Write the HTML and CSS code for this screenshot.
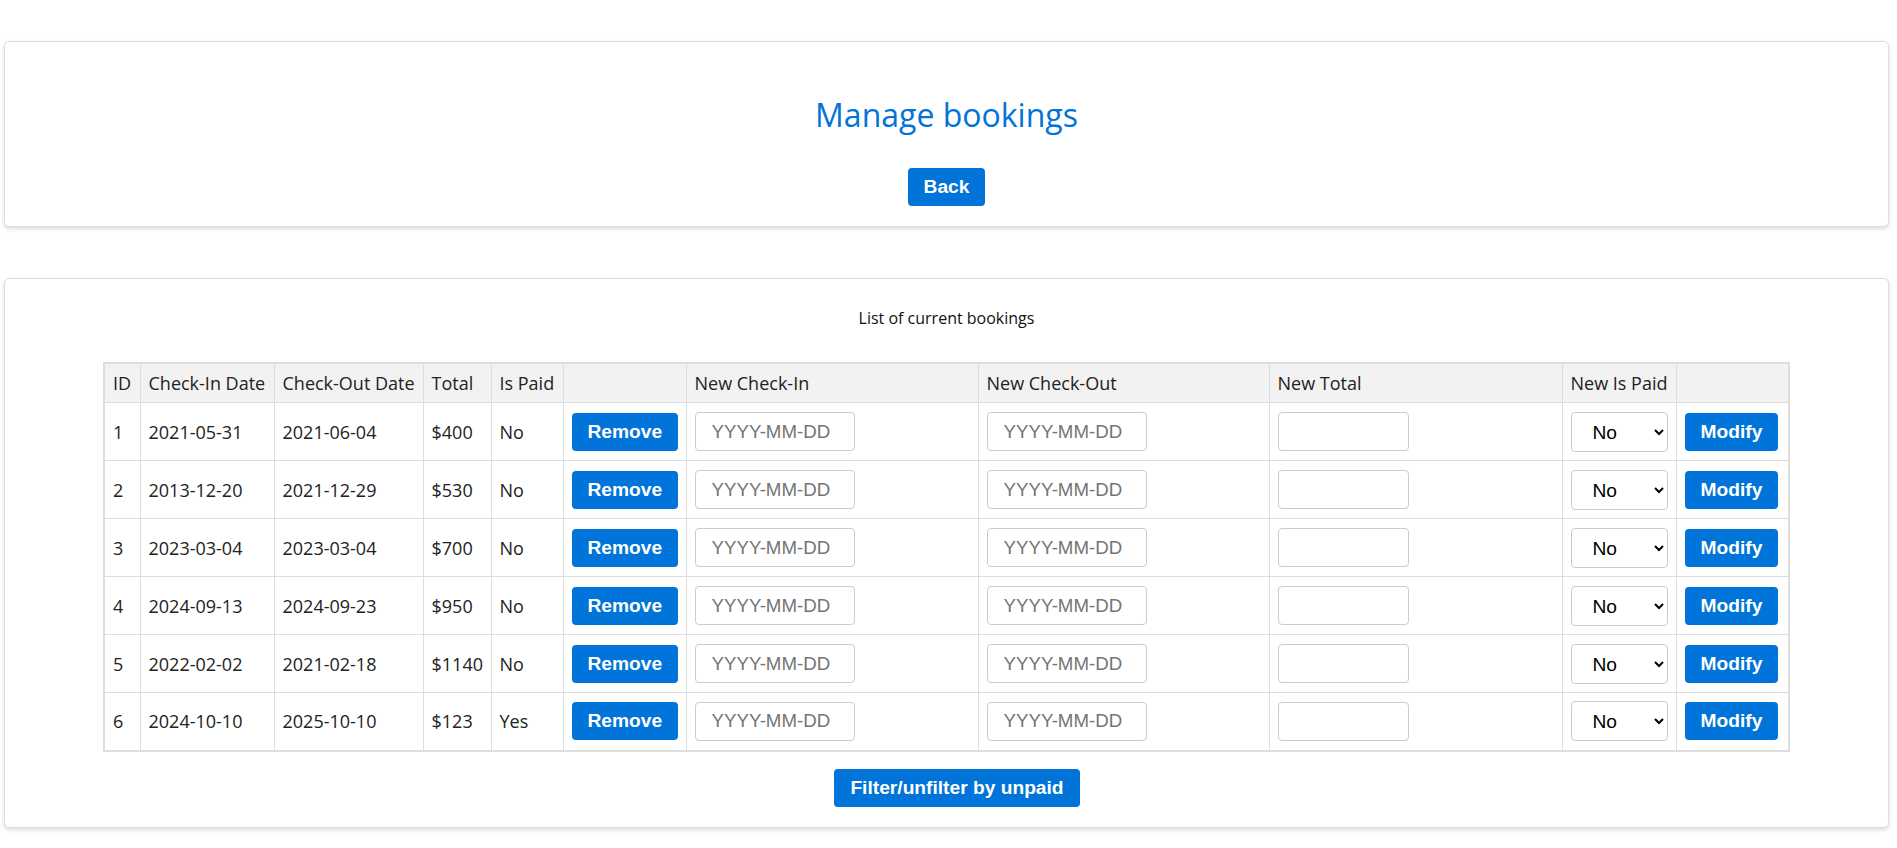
FILE: index.html
```html
<!DOCTYPE html>
<html lang="en">
<head>
<meta charset="utf-8">
<title>Manage bookings</title>
<link rel="stylesheet" href="styles.css">
</head>
<body>
<main class="page">
  <section class="card card-head">
    <h1 class="title">Manage bookings</h1>
    <button class="btn">Back</button>
  </section>

  <section class="card card-list">
    <p class="caption">List of current bookings</p>
    <table class="bookings">
      <colgroup>
        <col class="c-id"><col class="c-in"><col class="c-out"><col class="c-total"><col class="c-paid">
        <col class="c-rm"><col class="c-nin"><col class="c-nout"><col class="c-ntotal"><col class="c-npaid"><col class="c-mod">
      </colgroup>
      <thead>
        <tr>
          <th>ID</th><th>Check-In Date</th><th>Check-Out Date</th><th>Total</th><th>Is Paid</th>
          <th></th><th>New Check-In</th><th>New Check-Out</th><th>New Total</th><th>New Is Paid</th><th></th>
        </tr>
      </thead>
      <tbody>
        <tr>
          <td>1</td><td>2021-05-31</td><td>2021-06-04</td><td>$400</td><td>No</td>
          <td><button class="btn">Remove</button></td>
          <td><input class="field date" type="text" placeholder="YYYY-MM-DD"></td>
          <td><input class="field date" type="text" placeholder="YYYY-MM-DD"></td>
          <td><input class="field total" type="text"></td>
          <td><select class="pick"><option>No</option><option>Yes</option></select></td>
          <td><button class="btn">Modify</button></td>
        </tr>
        <tr>
          <td>2</td><td>2013-12-20</td><td>2021-12-29</td><td>$530</td><td>No</td>
          <td><button class="btn">Remove</button></td>
          <td><input class="field date" type="text" placeholder="YYYY-MM-DD"></td>
          <td><input class="field date" type="text" placeholder="YYYY-MM-DD"></td>
          <td><input class="field total" type="text"></td>
          <td><select class="pick"><option>No</option><option>Yes</option></select></td>
          <td><button class="btn">Modify</button></td>
        </tr>
        <tr>
          <td>3</td><td>2023-03-04</td><td>2023-03-04</td><td>$700</td><td>No</td>
          <td><button class="btn">Remove</button></td>
          <td><input class="field date" type="text" placeholder="YYYY-MM-DD"></td>
          <td><input class="field date" type="text" placeholder="YYYY-MM-DD"></td>
          <td><input class="field total" type="text"></td>
          <td><select class="pick"><option>No</option><option>Yes</option></select></td>
          <td><button class="btn">Modify</button></td>
        </tr>
        <tr>
          <td>4</td><td>2024-09-13</td><td>2024-09-23</td><td>$950</td><td>No</td>
          <td><button class="btn">Remove</button></td>
          <td><input class="field date" type="text" placeholder="YYYY-MM-DD"></td>
          <td><input class="field date" type="text" placeholder="YYYY-MM-DD"></td>
          <td><input class="field total" type="text"></td>
          <td><select class="pick"><option>No</option><option>Yes</option></select></td>
          <td><button class="btn">Modify</button></td>
        </tr>
        <tr>
          <td>5</td><td>2022-02-02</td><td>2021-02-18</td><td>$1140</td><td>No</td>
          <td><button class="btn">Remove</button></td>
          <td><input class="field date" type="text" placeholder="YYYY-MM-DD"></td>
          <td><input class="field date" type="text" placeholder="YYYY-MM-DD"></td>
          <td><input class="field total" type="text"></td>
          <td><select class="pick"><option>No</option><option>Yes</option></select></td>
          <td><button class="btn">Modify</button></td>
        </tr>
        <tr>
          <td>6</td><td>2024-10-10</td><td>2025-10-10</td><td>$123</td><td>Yes</td>
          <td><button class="btn">Remove</button></td>
          <td><input class="field date" type="text" placeholder="YYYY-MM-DD"></td>
          <td><input class="field date" type="text" placeholder="YYYY-MM-DD"></td>
          <td><input class="field total" type="text"></td>
          <td><select class="pick"><option>No</option><option>Yes</option></select></td>
          <td><button class="btn">Modify</button></td>
        </tr>
      </tbody>
    </table>
    <div class="actions">
      <button class="btn btn-filter">Filter/unfilter by unpaid</button>
    </div>
  </section>
</main>
</body>
</html>
```

FILE: styles.css
```css
* {
  box-sizing: border-box;
}

html, body {
  margin: 0;
  padding: 0;
  background: #ffffff;
}

body {
  font-family: "Open Sans", "Liberation Sans", sans-serif;
  color: #222222;
}

.page {
  padding: 41px 8px 40px 4px;
  display: flex;
  flex-direction: column;
  gap: 51px;
}

.card {
  background: #ffffff;
  border: 1px solid #dddddd;
  border-radius: 5px;
  box-shadow: 0 2px 4px rgba(0, 0, 0, 0.14);
  text-align: center;
}

.card-head {
  padding: 51px 20px 20px;
}

.title {
  margin: 0 0 32px;
  font-family: "Open Sans", sans-serif;
  font-size: 32px;
  font-weight: 400;
  line-height: normal;
  color: #0074d9;
}

.btn {
  display: inline-block;
  font-family: "Liberation Sans", Arial, sans-serif;
  font-size: 19.2px;
  font-weight: 700;
  line-height: 22px;
  color: #ffffff;
  background: #0074d9;
  border: none;
  border-radius: 4px;
  padding: 8px 16px;
  height: 38px;
  cursor: pointer;
}

.card-list {
  padding: 28px 20px 20px;
}

.caption {
  margin: 0 0 33px;
  font-size: 16px;
  line-height: normal;
  color: #111111;
}

.bookings {
  margin: 0 auto;
  width: 1685px;
  table-layout: fixed;
  border-collapse: collapse;
  border: 2px solid #dddddd;
  text-align: left;
  font-size: 18px;
}

.c-id { width: 36px; }
.c-in { width: 134px; }
.c-out { width: 149px; }
.c-total { width: 68px; }
.c-paid { width: 72px; }
.c-rm { width: 123px; }
.c-nin { width: 292px; }
.c-nout { width: 291px; }
.c-ntotal { width: 293px; }
.c-npaid { width: 114px; }
.c-mod { width: 113px; }

.bookings th,
.bookings td {
  border: 1px solid #dddddd;
  padding: 8px;
  vertical-align: middle;
  white-space: nowrap;
  overflow: hidden;
}

.bookings th {
  background: #f2f2f2;
  font-weight: 400;
  padding-top: 7px;
  padding-bottom: 7px;
  line-height: 24px;
}

.bookings td {
  height: 58px;
  line-height: 24px;
}

.bookings td .btn,
.bookings td .field,
.bookings td .pick {
  display: block;
}

.field {
  height: 39px;
  padding: 8px 16px;
  border: 1px solid #cccccc;
  border-radius: 4px;
  font-family: "Liberation Sans", Arial, sans-serif;
  font-size: 18.7px;
  color: #222222;
  background: #ffffff;
}

.field::placeholder {
  color: #757575;
}

.field.date {
  width: 160px;
}

.field.total {
  width: 131px;
}

.pick {
  width: 97px;
  height: 40px;
  padding: 8px 8px 8px 17px;
  border: 1px solid #cccccc;
  border-radius: 4px;
  font-family: "Liberation Sans", Arial, sans-serif;
  font-size: 19.2px;
  color: #000000;
  background: #ffffff;
}

.actions {
  margin-top: 17px;
  text-align: center;
}

.btn-filter {
  margin-left: 21px;
}
```
